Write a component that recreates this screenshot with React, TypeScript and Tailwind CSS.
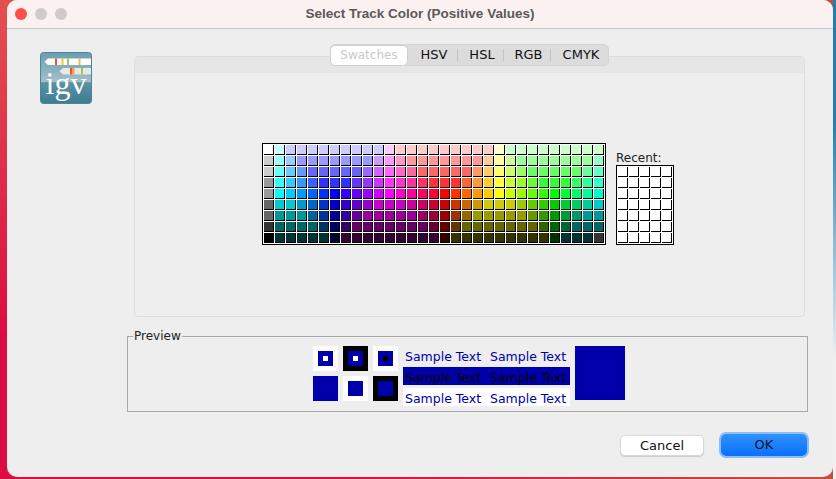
import React from "react";

// run-length rows of the colour table: [hex, count]
const swatchRows: [string, number][][] = [
  [["ffffff", 1], ["ccffff", 1], ["ccccff", 9], ["ffccff", 1], ["ffcccc", 9], ["ffffcc", 1], ["ccffcc", 9]],
  [["cccccc", 1], ["99ffff", 1], ["99ccff", 1], ["9999ff", 7], ["cc99ff", 1], ["ff99ff", 1], ["ff99cc", 1], ["ff9999", 7], ["ffcc99", 1], ["ffff99", 1], ["ccff99", 1], ["99ff99", 7], ["99ffcc", 1]],
  [["cccccc", 1], ["66ffff", 1], ["66ccff", 1], ["6699ff", 1], ["6666ff", 5], ["9966ff", 1], ["cc66ff", 1], ["ff66ff", 1], ["ff66cc", 1], ["ff6699", 1], ["ff6666", 5], ["ff9966", 1], ["ffcc66", 1], ["ffff66", 1], ["ccff66", 1], ["99ff66", 1], ["66ff66", 5], ["66ff99", 1], ["66ffcc", 1]],
  [["999999", 1], ["33ffff", 1], ["33ccff", 1], ["3399ff", 1], ["3366ff", 1], ["3333ff", 3], ["6633ff", 1], ["9933ff", 1], ["cc33ff", 1], ["ff33ff", 1], ["ff33cc", 1], ["ff3399", 1], ["ff3366", 1], ["ff3333", 3], ["ff6633", 1], ["ff9933", 1], ["ffcc33", 1], ["ffff33", 1], ["ccff33", 1], ["99ff33", 1], ["66ff33", 1], ["33ff33", 3], ["33ff66", 1], ["33ff99", 1], ["33ffcc", 1]],
  [["999999", 1], ["00ffff", 1], ["00ccff", 1], ["0099ff", 1], ["0066ff", 1], ["0033ff", 1], ["0000ff", 1], ["3300ff", 1], ["6600ff", 1], ["9900ff", 1], ["cc00ff", 1], ["ff00ff", 1], ["ff00cc", 1], ["ff0099", 1], ["ff0066", 1], ["ff0033", 1], ["ff0000", 1], ["ff3300", 1], ["ff6600", 1], ["ff9900", 1], ["ffcc00", 1], ["ffff00", 1], ["ccff00", 1], ["99ff00", 1], ["66ff00", 1], ["33ff00", 1], ["00ff00", 1], ["00ff33", 1], ["00ff66", 1], ["00ff99", 1], ["00ffcc", 1]],
  [["666666", 1], ["00cccc", 2], ["0099cc", 1], ["0066cc", 1], ["0033cc", 1], ["0000cc", 1], ["3300cc", 1], ["6600cc", 1], ["9900cc", 1], ["cc00cc", 3], ["cc0099", 1], ["cc0066", 1], ["cc0033", 1], ["cc0000", 1], ["cc3300", 1], ["cc6600", 1], ["cc9900", 1], ["cccc00", 3], ["99cc00", 1], ["66cc00", 1], ["33cc00", 1], ["00cc00", 1], ["00cc33", 1], ["00cc66", 1], ["00cc99", 1], ["00cccc", 1]],
  [["666666", 1], ["009999", 3], ["006699", 1], ["003399", 1], ["000099", 1], ["330099", 1], ["660099", 1], ["990099", 5], ["990066", 1], ["990033", 1], ["990000", 1], ["993300", 1], ["996600", 1], ["999900", 5], ["669900", 1], ["339900", 1], ["009900", 1], ["009933", 1], ["009966", 1], ["009999", 2]],
  [["333333", 1], ["006666", 4], ["003366", 1], ["000066", 1], ["330066", 1], ["660066", 7], ["660033", 1], ["660000", 1], ["663300", 1], ["666600", 7], ["336600", 1], ["006600", 1], ["006633", 1], ["006666", 3]],
  [["000000", 1], ["003333", 5], ["000033", 1], ["330033", 9], ["330000", 1], ["333300", 9], ["003300", 1], ["003333", 3], ["333333", 1]],
];

const swatches = swatchRows.flatMap((row) =>
  row.flatMap(([hex, count]) => Array.from({ length: count }, () => `#${hex}`))
);

const tabs = [
  { label: "HSV", className: "w-[50px] border-r border-[#c4c4c4]" },
  { label: "HSL", className: "w-[46px] border-r border-[#c4c4c4]" },
  { label: "RGB", className: "w-[47px] border-r border-[#c4c4c4]" },
  { label: "CMYK", className: "w-[57px]" },
];

const IgvLogo = () => (
  <svg width="52" height="52" viewBox="0 0 52 52" className="shrink-0">
    <defs>
      <linearGradient id="igvBg" x1="0" y1="0" x2="0" y2="1">
        <stop offset="0" stopColor="#6b9fb0" />
        <stop offset="0.58" stopColor="#a3c0cb" />
        <stop offset="0.59" stopColor="#5b93a5" />
        <stop offset="1" stopColor="#3c7d90" />
      </linearGradient>
    </defs>
    <rect x="0.5" y="0.5" width="51" height="51" rx="3" fill="url(#igvBg)" stroke="#4d8496" />
    <path d="M8 6.500h43v6.500h-43l-3.500-3.200z" fill="#ffffff" />
    <path d="M23 16h28v6.500h-28l-3.500-3.200z" fill="#e8e8e8" />
    <rect x="15" y="6.500" width="2" height="6.500" fill="#e8552b" />
    <rect x="21.500" y="6.500" width="2" height="6.500" fill="#f2c230" />
    <rect x="27" y="6.500" width="2" height="6.500" fill="#9cc65a" />
    <rect x="38.500" y="6.500" width="2" height="6.500" fill="#f2c230" />
    <rect x="30" y="16" width="2.500" height="6.500" fill="#e8552b" />
    <rect x="32.500" y="16" width="2" height="6.500" fill="#f2a830" />
    <rect x="41" y="16" width="2" height="6.500" fill="#9cc65a" />
    <text x="26" y="42" textAnchor="middle" fill="#ffffff" fontSize="32" fontFamily="'Liberation Serif', serif">
      igv
    </text>
  </svg>
);

const SmallSwatch = ({ outer, inner, dot }: { outer: string; inner?: string; dot?: string }) => (
  <div className={`w-[25px] h-[25px] flex items-center justify-center ${outer}`}>
    {inner && (
      <div className={`w-[15px] h-[15px] flex items-center justify-center ${inner}`}>
        {dot && <div className={`w-[5px] h-[5px] ${dot}`} />}
      </div>
    )}
  </div>
);

const SampleRow = ({ className }: { className: string }) => (
  <div className={`h-[18px] w-[167px] flex items-center pl-[2px] pt-[4px] leading-none whitespace-nowrap ${className}`}>
    <span className="w-[85px]">Sample Text</span>
    <span>Sample Text</span>
  </div>
);

export default function App() {
  return (
    <div className="w-[836px] h-[479px] overflow-hidden pl-[7px] pr-[3px] pb-[2px] bg-no-repeat bg-[length:3px_100%,100%_100%,100%_100%] bg-[position:right_top,left_top,left_top] bg-[linear-gradient(to_bottom,#1f7fb5_0%,#1f7fb5_25%,#f0f0f0_75%),linear-gradient(to_right,transparent_40%,#c4503c),linear-gradient(to_bottom,#e25050,#dc0c42_70%)] font-['DejaVu_Sans','Liberation_Sans',sans-serif]">
      <div className="h-full rounded-[10px] overflow-hidden bg-[#eeeeee] flex flex-col">
        {/* title bar */}
        <div className="h-[29px] shrink-0 flex items-center bg-[#fbf1f1] border-b border-[#c6c6c6] relative pl-[8px] gap-[8px]">
          <div className="w-3 h-3 rounded-full bg-[#fc4f4a]" />
          <div className="w-3 h-3 rounded-full bg-[#d0caca]" />
          <div className="w-3 h-3 rounded-full bg-[#d0caca]" />
          <div className="absolute inset-x-0 top-0 h-[28px] flex items-center justify-center text-[13.5px] font-bold font-['Liberation_Sans',sans-serif] text-[#5c5858]">
            Select Track Color (Positive Values)
          </div>
        </div>

        <div className="flex flex-1 pl-[33px] pt-[23px]">
          <div className="w-[87px] shrink-0">
            <IgvLogo />
          </div>

          <div className="w-[681px] flex flex-col">
            {/* tab panel */}
            <div className="relative ml-[7px] mr-[3px] mt-[4px] h-[261px] rounded-[4px] border border-[#dedede] flex flex-col">
              <div className="h-[16px] shrink-0 bg-[#e6e6e6] rounded-t-[4px]" />
              <div className="absolute top-[-13px] left-[195px] h-[22px] flex items-center rounded-[5px] bg-[#dcdcdc] border border-[#d4d4d4] text-[13px] text-[#111111]">
                <div className="w-[78px] h-[21px] -ml-px rounded-[5px] bg-white border border-[#d0d0d0] flex items-center justify-center text-[#c8c8c8] text-[12px]">
                  Swatches
                </div>
                {tabs.map((tab) => (
                  <div key={tab.label} className={`h-[12px] pl-[3px] flex items-center justify-center ${tab.className}`}>
                    {tab.label}
                  </div>
                ))}
              </div>

              <div className="flex-1 flex items-center justify-center pr-[3px] pb-[2px]">
                <div className="flex items-end gap-[10px]">
                  <div className="grid grid-cols-[repeat(31,10px)] auto-rows-[10px] gap-px p-px border border-black bg-white">
                    {swatches.map((color, i) => (
                      <div key={i} className="border-r border-b border-black" style={{ backgroundColor: color }} />
                    ))}
                  </div>
                  <div className="flex flex-col">
                    <div className="text-[12px] leading-[14px] text-[#222222]">Recent:</div>
                    <div className="grid grid-cols-[repeat(5,10px)] auto-rows-[10px] gap-px p-px border border-black bg-white">
                      {Array.from({ length: 35 }, (_, i) => (
                        <div key={i} className="border-r border-b border-black bg-white" />
                      ))}
                    </div>
                  </div>
                </div>
              </div>
            </div>

            {/* preview */}
            <fieldset className="mt-[12px] h-[83px] border border-[#a8a8a8] pt-[3px] min-w-0">
              <legend className="ml-[5px] px-[1px] text-[12px] leading-[14px] text-[#222222]">Preview</legend>
              <div className="ml-[185px] flex gap-[5px] text-[12.5px] text-[#0000aa]">
                <div className="grid grid-cols-[25px_25px_25px] gap-[5px] content-start">
                  <SmallSwatch outer="bg-white" inner="bg-[#0000aa]" dot="bg-white" />
                  <SmallSwatch outer="bg-black" inner="bg-[#0000aa]" dot="bg-white" />
                  <SmallSwatch outer="bg-white" inner="bg-[#0000aa]" dot="bg-black" />
                  <SmallSwatch outer="bg-[#0000aa]" />
                  <SmallSwatch outer="bg-white" inner="bg-[#0000aa]" />
                  <SmallSwatch outer="bg-black" inner="bg-[#0000aa]" />
                </div>
                <div className="flex flex-col gap-[3px] w-[167px]">
                  <SampleRow className="" />
                  <SampleRow className="bg-[#0000aa] text-black" />
                  <SampleRow className="bg-white" />
                </div>
                <div className="w-[50px] h-[54px] bg-[#0000aa]" />
              </div>
            </fieldset>

            {/* buttons */}
            <div className="flex justify-end items-center gap-[17px] pr-[1px] mt-[22px] text-[13px] text-[#111111]">
              <button className="w-[84px] h-[21px] rounded-[5px] bg-white border border-[#d8d8d8] shadow-[0_1px_1px_rgba(0,0,0,0.15)]">
                Cancel
              </button>
              <button className="w-[86px] h-[22px] rounded-[5px] bg-[linear-gradient(to_bottom,#2f92ff,#0a70ff)] ring-2 ring-[#8dbcf5]">
                OK
              </button>
            </div>
          </div>
        </div>
      </div>
    </div>
  );
}
